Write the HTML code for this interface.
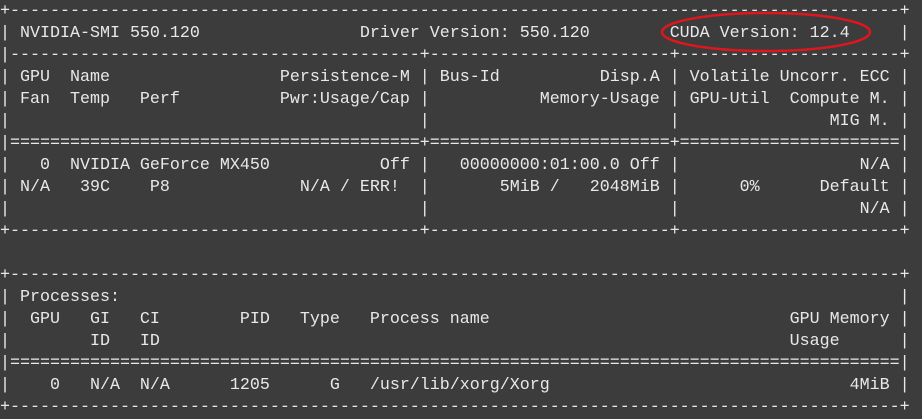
<!DOCTYPE html>
<html><head><meta charset="utf-8">
<style>
html,body{margin:0;padding:0;background:#3c3c3c;width:922px;height:413px;overflow:hidden;}
pre{position:absolute;left:0;top:1px;margin:0;font-family:"Liberation Mono",monospace;font-size:16.67px;line-height:22px;color:#e8e8e8;white-space:pre;}
svg{position:absolute;left:0;top:0;}
</style></head><body>
<pre>+-----------------------------------------------------------------------------------------+
| NVIDIA-SMI 550.120                Driver Version: 550.120        CUDA Version: 12.4     |
|-----------------------------------------+------------------------+----------------------+
| GPU  Name                 Persistence-M | Bus-Id          Disp.A | Volatile Uncorr. ECC |
| Fan  Temp   Perf          Pwr:Usage/Cap |           Memory-Usage | GPU-Util  Compute M. |
|                                         |                        |               MIG M. |
|=========================================+========================+======================|
|   0  NVIDIA GeForce MX450           Off |   00000000:01:00.0 Off |                  N/A |
| N/A   39C    P8             N/A / ERR!  |       5MiB /   2048MiB |      0%      Default |
|                                         |                        |                  N/A |
+-----------------------------------------+------------------------+----------------------+
                                                                                         
+-----------------------------------------------------------------------------------------+
| Processes:                                                                              |
|  GPU   GI   CI        PID   Type   Process name                              GPU Memory |
|        ID   ID                                                               Usage      |
|=========================================================================================|
|    0   N/A  N/A      1205      G   /usr/lib/xorg/Xorg                              4MiB |
+-----------------------------------------------------------------------------------------+</pre>
<svg width="922" height="413"><ellipse cx="766" cy="32" rx="104" ry="19" fill="none" stroke="#e0161c" stroke-width="2.5"/></svg>
</body></html>
